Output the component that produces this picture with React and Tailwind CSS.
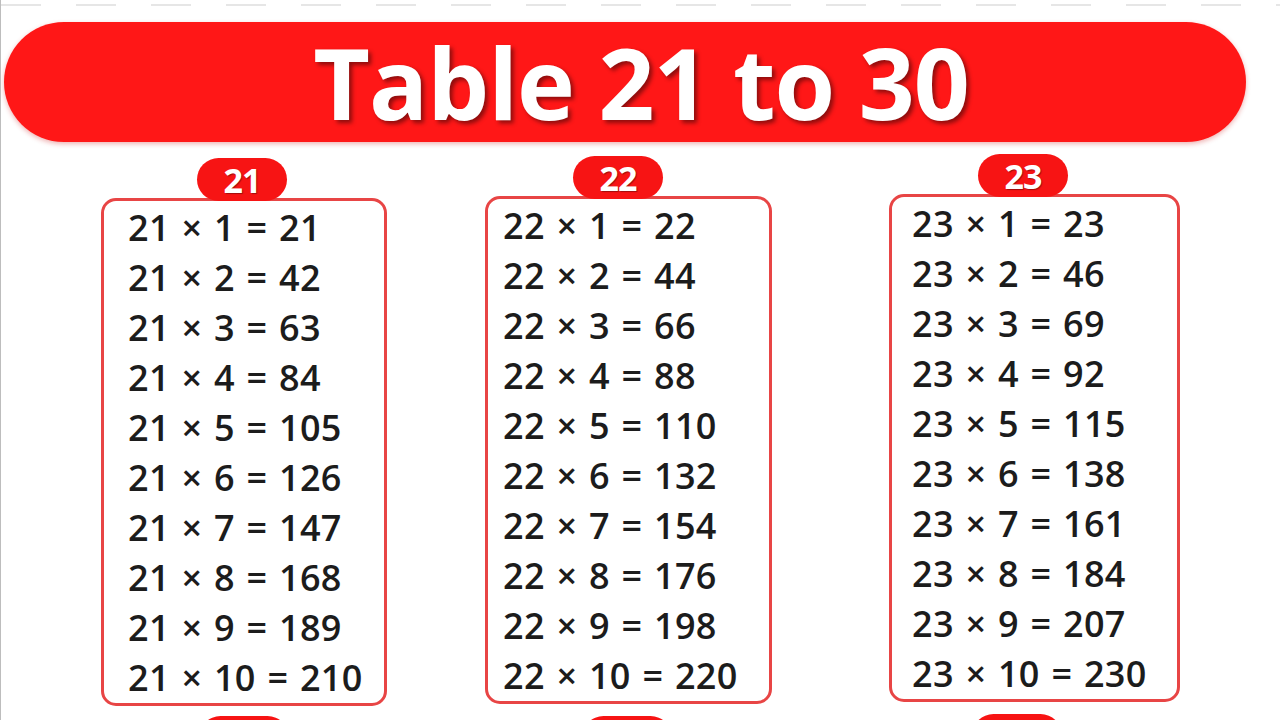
import React from "react";

const cols = [
  { n: 21, mt: "mt-[16px]", ml: "ml-[100px]", w: "w-[286px]", bml: "ml-[96px]", pl: "pl-[24px]", nml: "ml-[98px]", gap: "mt-[10px]" },
  { n: 22, mt: "mt-[14px]", ml: "ml-[98px]", w: "w-[287px]", bml: "ml-[88px]", pl: "pl-[15px]", nml: "ml-[97px]", gap: "mt-[12px]" },
  { n: 23, mt: "mt-[12px]", ml: "ml-[117px]", w: "w-[291px]", bml: "ml-[89px]", pl: "pl-[20px]", nml: "ml-[83px]", gap: "mt-[12px]" },
];

function Badge({ label, cls }) {
  return (
    <div
      className={`relative z-10 flex h-[43px] w-[90px] items-center justify-center rounded-full bg-[#f71414] text-[34px] font-bold leading-none tracking-[-1px] text-white [text-shadow:1px_1px_1px_rgba(0,0,0,0.35)] ${cls}`}
    >
      {label}
    </div>
  );
}

export default function App() {
  return (
    <div
      className="relative h-[720px] w-[1280px] overflow-hidden border-l border-[#bdbdbd] bg-white"
      style={{ fontFamily: '"Open Sans", "Noto Sans", sans-serif' }}
    >
      <div className="mt-[4px] h-[2px] w-full bg-[repeating-linear-gradient(90deg,#e6e6e6_0px,#e6e6e6_40px,transparent_40px,transparent_75px)]" />
      <div className="ml-[3px] mt-[16px] flex h-[120px] w-[1242px] items-center justify-center rounded-full bg-[#ff1717] pl-[32px] shadow-[0_2px_5px_rgba(200,0,0,0.3)]">
        <span className="text-[98px] font-bold leading-none tracking-[-1px] text-white [text-shadow:3px_3px_4px_rgba(0,0,0,0.45)]">
          Table 21 to 30
        </span>
      </div>
      <div className="flex items-start">
        {cols.map((c) => (
          <div key={c.n} className={`flex flex-col items-start ${c.mt} ${c.ml} ${c.w}`}>
            <Badge label={c.n} cls={c.bml} />
            <div
              className={`-mt-[3px] w-full rounded-[15px] border-[3px] border-[#e84545] pt-[2px] ${c.pl}`}
            >
              {Array.from({ length: 10 }, (_, i) => (
                <div
                  key={i}
                  className="h-[50px] whitespace-nowrap text-[36px] font-semibold leading-[50px] tracking-[0.3px] text-[#1c1c1c] [word-spacing:2px]"
                >
                  {c.n} × {i + 1} = {c.n * (i + 1)}
                </div>
              ))}
            </div>
            <div className={`h-[43px] w-[90px] rounded-full bg-[#f71414] ${c.nml} ${c.gap}`} />
          </div>
        ))}
      </div>
    </div>
  );
}
